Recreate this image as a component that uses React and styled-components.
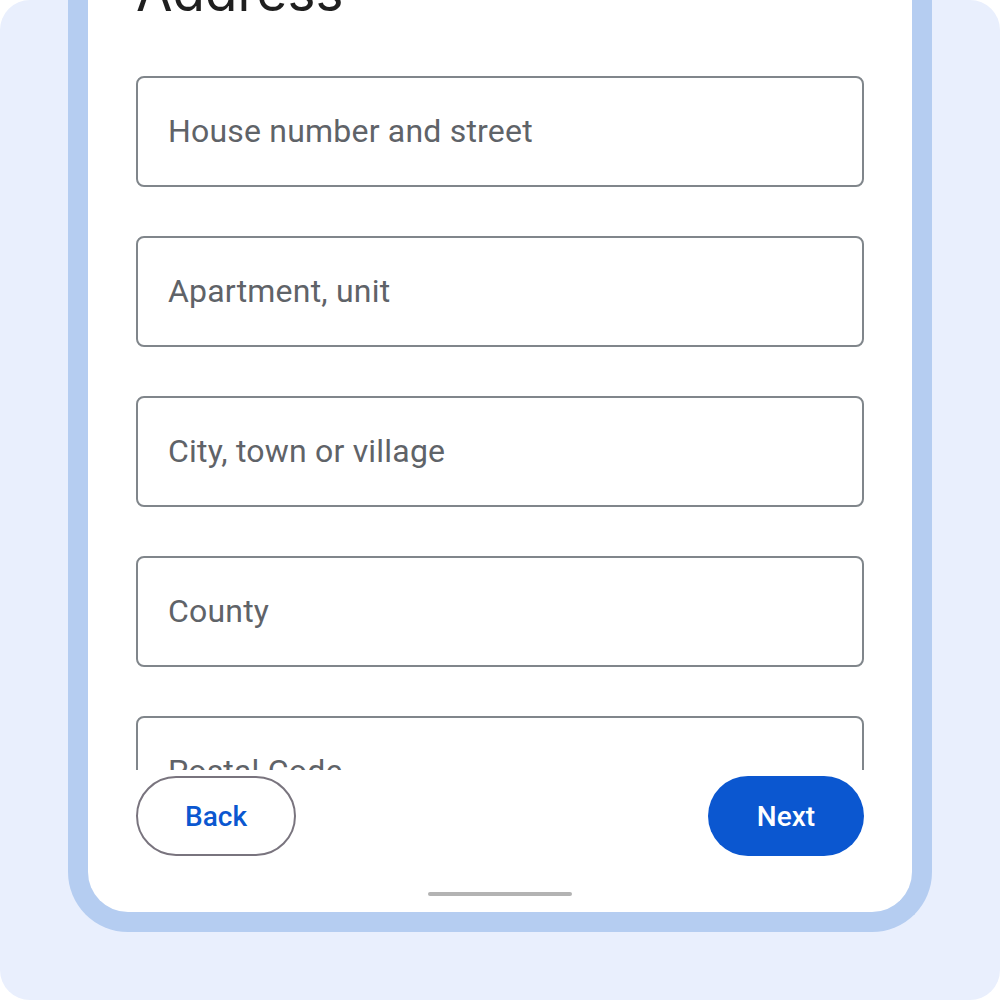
import styled, { createGlobalStyle } from "styled-components";

const GlobalStyle = createGlobalStyle`
  html, body {
    margin: 0;
    padding: 0;
    background: #ffffff;
  }
  * {
    box-sizing: border-box;
  }
`;

const fields = [
  "House number and street",
  "Apartment, unit",
  "City, town or village",
  "County",
  "Postal Code",
];

const App = () => {
  return (
    <>
      <GlobalStyle />
      <Canvas>
        <Phone>
          <FormArea>
            <Heading>Address</Heading>
            {fields.map((label) => (
              <Field key={label} placeholder={label} />
            ))}
          </FormArea>
          <ButtonRow>
            <ActionBtn>Back</ActionBtn>
            <ActionBtn $primary>Next</ActionBtn>
          </ButtonRow>
          <HomeBar />
        </Phone>
      </Canvas>
    </>
  );
};

export default App;

const Canvas = styled.div`
  width: 1000px;
  height: 1000px;
  background-color: #e9effd;
  border-radius: 30px;
  overflow: hidden;
  padding: 0 68px;
`;

const Phone = styled.div`
  height: 932px;
  background-color: #ffffff;
  border: 20px solid #b5cdf1;
  border-top: 0;
  border-radius: 0 0 60px 60px;
  padding: 0 48px 16px;
  display: flex;
  flex-direction: column;
`;

const FormArea = styled.div`
  flex: 1;
  min-height: 0;
  overflow: hidden;
  display: flex;
  flex-direction: column;
  gap: 49px;
`;

const Heading = styled.h1`
  margin: -40px 0 3px;
  font-family: Inter, "Open Sans", sans-serif;
  font-weight: 400;
  font-size: 53px;
  line-height: 64px;
  color: #1f1f1f;
`;

const Field = styled.input`
  flex-shrink: 0;
  width: 100%;
  height: 111px;
  border: 2px solid #80868b;
  border-radius: 8px;
  padding: 0 30px 2px;
  background: #ffffff;
  font-family: Roboto, "Liberation Sans", sans-serif;
  font-size: 32px;
  letter-spacing: 0.2px;
  color: #1f1f1f;
  outline: none;

  &::placeholder {
    color: #5f6368;
  }
`;

const ButtonRow = styled.div`
  display: flex;
  justify-content: space-between;
  align-items: center;
  margin-top: 6px;
`;

const ActionBtn = styled.button`
  width: ${(p) => (p.$primary ? "156px" : "160px")};
  height: 80px;
  border-radius: 40px;
  border: ${(p) => (p.$primary ? "none" : "2px solid #79747e")};
  background-color: ${(p) => (p.$primary ? "#0b57d0" : "transparent")};
  color: ${(p) => (p.$primary ? "#ffffff" : "#0b57d0")};
  font-family: Roboto, "Liberation Sans", sans-serif;
  font-weight: 500;
  font-size: 28px;
  cursor: pointer;
`;

const HomeBar = styled.div`
  align-self: center;
  width: 144px;
  height: 4px;
  border-radius: 2px;
  background-color: #b3b3b3;
  margin-top: 36px;
`;
